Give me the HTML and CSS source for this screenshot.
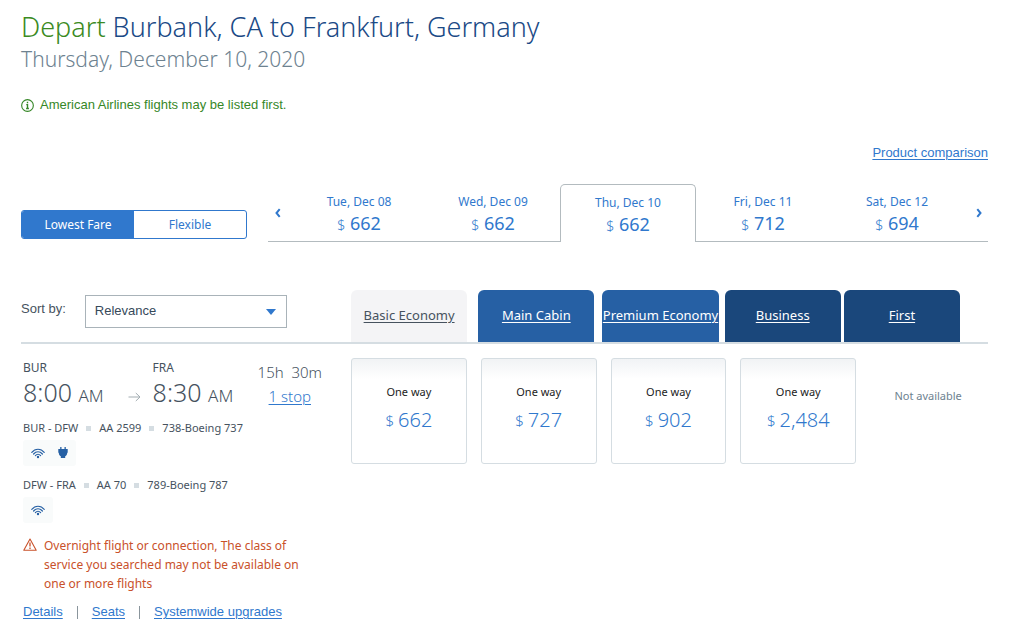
FILE: index.html
```html
<!DOCTYPE html>
<html lang="en">
<head>
<meta charset="utf-8">
<title>Choose flights</title>
<link rel="stylesheet" href="styles.css">
</head>
<body>
<svg class="sprite" aria-hidden="true">
  <symbol id="wifi" viewBox="0 0 14 11">
    <g fill="none" stroke="currentColor" stroke-width="1.2" stroke-linecap="round">
      <path d="M.8 4.4C4.2.2 9.8.2 13.2 4.4"/>
      <path d="M2.6 6c2.5-3 6.3-3 8.8 0"/>
      <path d="M4.4 7.6c1.5-1.8 3.7-1.8 5.2 0"/>
    </g>
    <circle cx="7" cy="9" r="1.2" fill="currentColor"/>
  </symbol>
  <symbol id="plug" viewBox="0 0 10 12">
    <path fill="currentColor" d="M2.200 0h1.300v2h3V0h1.300v2h1.900v3.800H9.200c0 2-.8 3-2 3.400V11H2.800V9.200C1.600 8.800.8 7.800.8 5.800H.3V2h1.900z"/>
  </symbol>
</svg>
<main class="page">
  <header>
    <h1 class="title"><span class="title-lead">Depart</span> Burbank, CA to Frankfurt, Germany</h1>
    <p class="subtitle">Thursday, December 10, 2020</p>
    <p class="notice">
      <svg class="icon-info" viewBox="0 0 14 14" aria-hidden="true"><circle cx="7" cy="7" r="6.300" fill="none" stroke="currentColor" stroke-width="1.200"/><path d="M7 3v1.700M5.700 6H7v4.200M5.500 10.200h3" fill="none" stroke="currentColor" stroke-width="1.500"/></svg>
      <span>American Airlines flights may be listed first.</span>
    </p>
  </header>

  <p class="compare"><a href="#">Product comparison</a></p>

  <section class="fare-bar">
    <div class="toggle">
      <button class="toggle-option toggle-on" type="button">Lowest Fare</button>
      <button class="toggle-option" type="button">Flexible</button>
    </div>
    <div class="dates">
      <button class="arrow arrow-prev" type="button" aria-label="Earlier dates"><svg viewBox="0 0 6 10"><path d="M4.700 1.200 1.500 5l3.200 3.800"/></svg></button>
      <button class="date" type="button"><span>Tue, Dec 08</span><span class="date-fare"><small>$</small> 662</span></button>
      <button class="date" type="button"><span>Wed, Dec 09</span><span class="date-fare"><small>$</small> 662</span></button>
      <button class="date date-on" type="button"><span>Thu, Dec 10</span><span class="date-fare"><small>$</small> 662</span></button>
      <button class="date" type="button"><span>Fri, Dec 11</span><span class="date-fare"><small>$</small> 712</span></button>
      <button class="date" type="button"><span>Sat, Dec 12</span><span class="date-fare"><small>$</small> 694</span></button>
      <button class="arrow arrow-next" type="button" aria-label="Later dates"><svg viewBox="0 0 6 10"><path d="M1.300 1.200 4.500 5 1.300 8.800"/></svg></button>
    </div>
  </section>

  <section class="list-head">
    <div class="sort">
      <label for="sort">Sort by:</label>
      <div class="select-box">
        <select id="sort"><option>Relevance</option><option>Price</option><option>Duration</option></select>
      </div>
    </div>
    <nav class="cabins">
      <a class="cabin cabin-basic" href="#">Basic Economy</a>
      <a class="cabin cabin-main" href="#">Main Cabin</a>
      <a class="cabin cabin-premium" href="#">Premium Economy</a>
      <a class="cabin cabin-business" href="#">Business</a>
      <a class="cabin cabin-first" href="#">First</a>
    </nav>
  </section>

  <article class="flight">
    <div class="info">
      <div class="summary">
        <div class="point"><span class="code">BUR</span><span class="time">8:00 <small>AM</small></span></div>
        <svg class="icon-to" viewBox="0 0 13 10" aria-hidden="true"><path d="M.5 5h11.500M7.800 1l4.200 4-4.200 4"/></svg>
        <div class="point"><span class="code">FRA</span><span class="time">8:30 <small>AM</small></span></div>
        <div class="length"><span>15h&nbsp; 30m</span><a href="#">1 stop</a></div>
      </div>
      <div class="leg"><span>BUR - DFW</span><span>AA 2599</span><span>738-Boeing 737</span></div>
      <div class="perks"><svg class="icon-wifi"><use href="#wifi"/></svg><svg class="icon-plug"><use href="#plug"/></svg></div>
      <div class="leg"><span>DFW - FRA</span><span>AA 70</span><span>789-Boeing 787</span></div>
      <div class="perks"><svg class="icon-wifi"><use href="#wifi"/></svg></div>
      <div class="warning">
        <svg class="icon-warn" viewBox="0 0 14 13" aria-hidden="true"><path d="M7 1 13.200 12.200H.8z" fill="none" stroke="currentColor" stroke-linejoin="round" stroke-width="1.100"/><path d="M7 4.500v4M7 9.500V11" fill="none" stroke="currentColor" stroke-width="1.300"/></svg>
        <p>Overnight flight or connection, The class of service you searched may not be available on one or more flights</p>
      </div>
      <div class="links"><a href="#">Details</a><a href="#">Seats</a><a href="#">Systemwide upgrades</a></div>
    </div>
    <div class="fares">
      <button class="fare" type="button">One way<span class="price"><small>$</small>662</span></button>
      <button class="fare" type="button">One way<span class="price"><small>$</small>727</span></button>
      <button class="fare" type="button">One way<span class="price"><small>$</small>902</span></button>
      <button class="fare" type="button">One way<span class="price"><small>$</small>2,484</span></button>
      <p class="fare-none">Not available</p>
    </div>
  </article>
</main>
</body>
</html>
```
FILE: styles.css
```css
* { box-sizing: border-box; }
body {
  margin: 0;
  background: #fff;
  color: #46525e;
  font-family: "Noto Sans", sans-serif;
  font-size: 12px;
}
h1, p { margin: 0; }
a { color: #3078cd; text-underline-offset: 2px; text-decoration-thickness: 1px; }
button { font: inherit; color: inherit; background: none; border: 0; padding: 0; cursor: pointer; }
.sprite { display: none; }
.page { padding: 9px 36px 8px 21px; }

.title { font-size: 27px; line-height: 36px; font-weight: 300; color: #1b4a86; }
.title-lead { color: #3a8a22; }
.subtitle { font-size: 21px; line-height: 28px; font-weight: 300; color: #6d8290; }
.notice {
  display: flex; align-items: center; gap: 6px;
  margin-top: 23px;
  color: #368727;
  font: 13px/18px "Liberation Sans", Arial, sans-serif;
}
.icon-info { width: 13px; height: 13px; }
.compare {
  margin-top: 30px;
  text-align: right;
  font: 13px/18px "Liberation Sans", Arial, sans-serif;
}

.fare-bar { display: flex; align-items: flex-end; gap: 21px; margin-top: 22px; }
.toggle {
  display: flex; flex: 0 0 226px; height: 29px;
  margin-bottom: 3px;
  border: 1px solid #3078cd; border-radius: 3px;
  overflow: hidden;
}
.toggle-option { flex: 1; color: #3078cd; font-size: 12px; }
.toggle-on { background: #3078cd; color: #fff; }
.dates { display: flex; flex: 1; height: 58px; }
.arrow { flex: 0 0 24px; border-bottom: 1px solid #b3bbbf; display: flex; justify-content: center; align-items: center; }
.arrow-prev { padding-right: 5px; }
.arrow-next { padding-left: 5px; }
.arrow svg { width: 6px; height: 10px; fill: none; stroke: #3078cd; stroke-width: 2; }
.date {
  flex: 1;
  display: flex; flex-direction: column; align-items: center; justify-content: center;
  padding-top: 5px;
  color: #3078cd; font-size: 12px; line-height: 18px;
  border-bottom: 1px solid #b3bbbf;
}
.date-on { border: 1px solid #b3bbbf; border-bottom: 0; border-radius: 5px 5px 0 0; }
.date-fare { font-size: 18px; line-height: 24px; }
.date-fare small { font-size: 14px; font-weight: 300; }

.list-head { display: flex; justify-content: space-between; margin-top: 48px; border-bottom: 2px solid #d5dde2; }
.sort {
  display: flex; align-items: center; gap: 19px;
  height: 42px;
  font: 13px/18px "Liberation Sans", Arial, sans-serif;
}
.sort label { height: 22px; }
.select-box { position: relative; width: 202px; }
.select-box::after {
  content: ""; position: absolute; right: 11px; top: 14px;
  border: 5px solid transparent; border-top: 6px solid #3078cd; border-bottom: 0;
  pointer-events: none;
}
.select-box select {
  appearance: none;
  width: 100%; height: 33px; padding: 0 9px;
  border: 1px solid #a9b3b9; border-radius: 0;
  background: #fff; color: #36495a; font: inherit;
}
.cabins { display: flex; flex: 0 1 637px; padding-right: 28px; }
.cabin {
  flex: 1; height: 52px; line-height: 50px;
  border-radius: 6px 6px 0 0;
  color: #fff; font-size: 13px; text-align: center; white-space: nowrap;
}
.cabin-basic { background: #f4f4f6; color: #46525e; }
.cabin-main { margin-left: 11px; background: #2660a4; }
.cabin-premium { margin-left: 8px; background: #2660a4; }
.cabin-business { margin-left: 6px; background: #1a477b; }
.cabin-first { margin-left: 3px; background: #1a477b; }

.flight { display: flex; justify-content: space-between; align-items: flex-start; margin-top: 14px; }
.info { flex: 0 0 310px; padding-left: 2px; }
.summary { display: flex; align-items: flex-end; }
.point { display: flex; flex-direction: column; }
.code { line-height: 20px; }
.time { font-size: 25px; line-height: 28px; font-weight: 300; }
.time small { font-size: 17px; }
.icon-to { width: 13px; height: 10px; margin: 0 12px 8px 24px; fill: none; stroke: #a3adb2; }
.length {
  display: flex; flex-direction: column; align-items: center;
  margin-left: auto; padding: 0 9px 2px 0;
  font-size: 15px; line-height: 24px; font-weight: 300;
}
.leg { display: flex; align-items: center; margin-top: 9px; font-size: 11px; line-height: 18px; }
.leg span + span::before {
  content: ""; display: inline-block; width: 5px; height: 5px;
  margin: 0 8px 1px; background: #d5dde2;
}
.perks {
  display: inline-flex; align-items: center; gap: 13px;
  height: 26px; margin: 3px 0 1px; padding: 0 8px;
  border-radius: 3px; background: #f9fbfb; color: #2660a4;
  vertical-align: top;
}
.icon-wifi { width: 14px; height: 11px; }
.icon-plug { width: 10px; height: 12px; }
.warning { display: flex; gap: 7px; margin-top: 12px; padding-right: 20px; color: #c9512a; font-size: 12px; line-height: 19px; }
.icon-warn { flex: 0 0 14px; height: 13px; margin-top: 2px; }
.links { display: flex; margin-top: 10px; font: 13px/18px "Liberation Sans", Arial, sans-serif; }
.links a + a::before {
  content: ""; display: inline-block; width: 1px; height: 13px;
  margin: 0 14px -3px; background: #8a959c;
}
.fares { display: grid; grid-template-columns: repeat(5, 1fr); gap: 14px; flex: 0 1 637px; padding-right: 2px; }
.fare {
  height: 106px; padding-bottom: 7px;
  border: 1px solid #d5dde2; border-radius: 3px;
  background: linear-gradient(#f1f3f5, #fff 20px);
  color: #222; font-size: 11px; line-height: 20px;
}
.price { display: block; margin-top: 4px; color: #3078cd; font-size: 20px; line-height: 28px; font-weight: 300; }
.price small { margin-right: 4px; font-size: 15px; vertical-align: 1px; }
.fare-none { align-self: center; padding-bottom: 32px; text-align: center; color: #6d8290; font-size: 11px; }
```
